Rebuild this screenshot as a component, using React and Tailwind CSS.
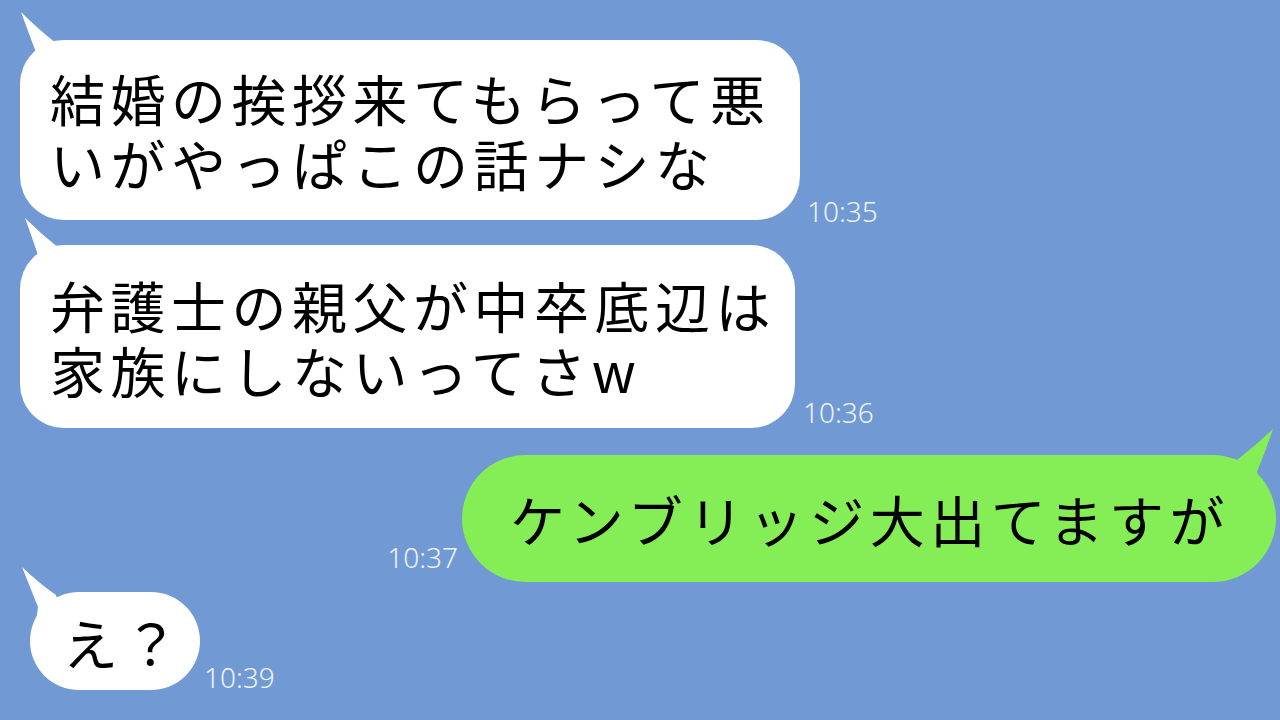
import React from "react";

const JP = { fontFamily: '"Noto Sans CJK JP", "Noto Sans", sans-serif' };
const TS = { fontFamily: '"Noto Sans", "Liberation Sans", sans-serif' };

function LeftTail({ d }) {
  return (
    <svg className="absolute left-0 top-0" width="1" height="1" style={{ overflow: "visible" }}>
      <path d={d} fill="#ffffff" />
    </svg>
  );
}

function Stamp({ children, cls }) {
  return (
    <div className={`text-[28px] leading-none font-light text-[#eef3fb] ${cls}`} style={TS}>
      {children}
    </div>
  );
}

export default function App() {
  return (
    <div className="w-[1280px] h-[720px] overflow-hidden bg-[#7199d3] flex flex-col pt-[40px]" style={JP}>
      {/* Row 1 */}
      <div className="flex items-end pl-[20px]">
        <div className="relative w-[780px] h-[180px] bg-white rounded-[44px] flex flex-col justify-center pl-[30px] text-[55px] leading-[65px] tracking-[5.5px] text-black">
          <LeftTail d="M14 30 L17 15 Q9 -6 1 -28 Q19 -10 36 3 L45 30 Z" />
          <div className="relative">
            結婚の挨拶来てもらって悪
            <br />
            いがやっぱこの話ナシな
          </div>
        </div>
        <Stamp cls="ml-[7px] mb-[-5px]">10:35</Stamp>
      </div>

      {/* Row 2 */}
      <div className="flex items-end pl-[20px] mt-[25px]">
        <div className="relative w-[775px] h-[183px] bg-white rounded-[44px] flex flex-col justify-center pl-[30px] text-[55px] leading-[65px] tracking-[5.5px] text-black">
          <LeftTail d="M16 30 L20 16 Q13 -5 5 -27 Q22 -10 40 4 L48 30 Z" />
          <div className="relative">
            弁護士の親父が中卒底辺は
            <br />
            家族にしないってさw
          </div>
        </div>
        <Stamp cls="ml-[8px] mb-[2px]">10:36</Stamp>
      </div>

      {/* Row 3 */}
      <div className="flex items-end justify-end pr-[4px] mt-[27px]">
        <Stamp cls="mr-[4px] mb-[11px]">10:37</Stamp>
        <div className="relative w-[814px] h-[127px] bg-[#85ed55] rounded-[64px] flex items-center pl-[48px] text-[55px] leading-[65px] tracking-[5.5px] text-black">
          <svg className="absolute right-0 top-0" width="1" height="1" style={{ overflow: "visible" }}>
            <path d="M-50 30 L-39 5 Q-20 -10 -3 -26 Q-10 -5 -19 17 L-15 30 Z" fill="#85ed55" transform="translate(1 0)" />
          </svg>
          <div className="relative">ケンブリッジ大出てますが</div>
        </div>
      </div>

      {/* Row 4 */}
      <div className="flex items-end pl-[30px] mt-[10px]">
        <div className="relative w-[170px] h-[98px] bg-white rounded-[49px] flex items-center pl-[33px] text-[55px] leading-[65px] tracking-[5.5px] text-black">
          <LeftTail d="M6 30 L8 15 Q0 -5 -8 -25 Q10 -8 26 3 L34 30 Z" />
          <div className="relative">え？</div>
        </div>
        <Stamp cls="ml-[4px] mb-[-1px]">10:39</Stamp>
      </div>
    </div>
  );
}
